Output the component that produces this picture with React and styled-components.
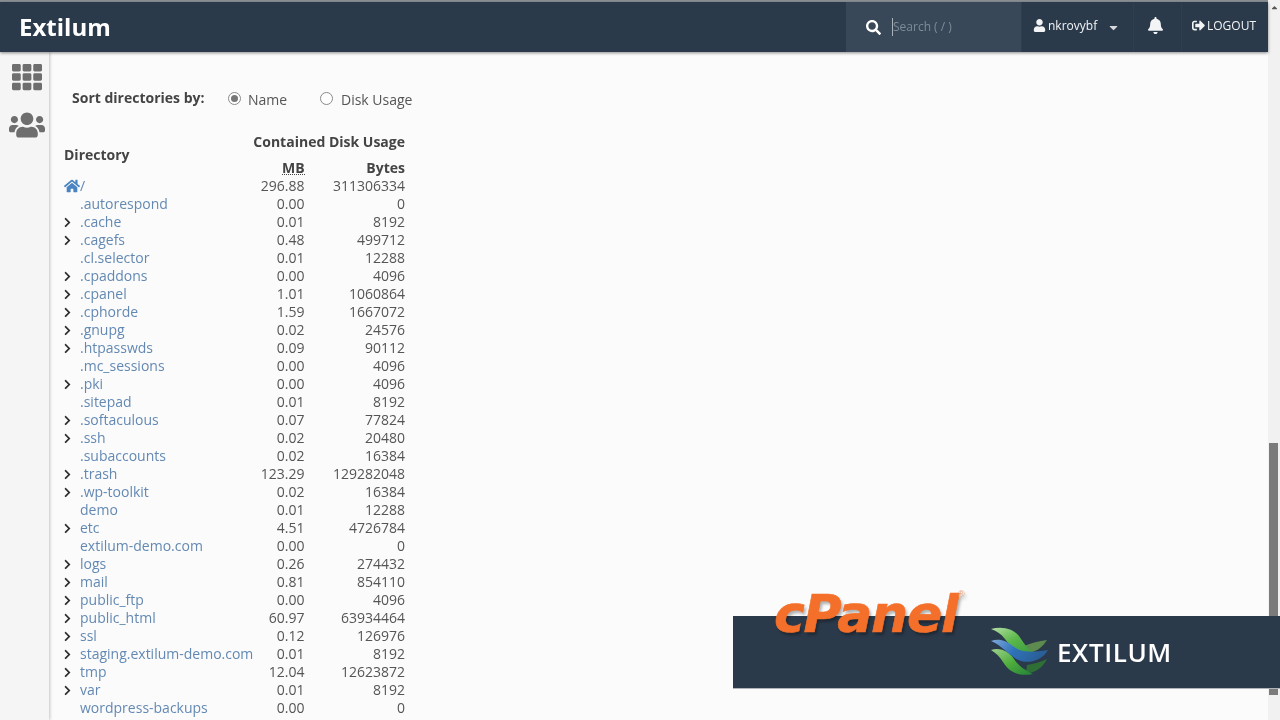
import styled, { createGlobalStyle } from "styled-components";
import { FaTh, FaUsers, FaHome, FaSearch, FaUser, FaBell, FaSignOutAlt, FaChevronRight, FaCaretDown, FaCaretUp } from "react-icons/fa";

const GlobalStyle = createGlobalStyle`
  html, body { margin: 0; padding: 0; height: 100%; overflow: hidden; }
  body { font-family: "Open Sans", "Liberation Sans", sans-serif; background: #fbfbfb; color: #444; }
`;

const Page = styled.div`
  width: 1280px;
  height: 720px;
  display: flex;
  position: relative;
  overflow: hidden;
  background: #fbfbfb;
  filter: blur(0.4px);
`;

const Viewport = styled.div`
  width: 1268px;
  display: flex;
  flex-direction: column;
`;

const TopEdge = styled.div`
  height: 2px;
  background: #8b9096;
`;

const Navbar = styled.header`
  height: 50px;
  background: #2b3a4b;
  display: flex;
  align-items: center;
  box-shadow: 0 1px 3px rgba(0, 0, 0, 0.45);
  position: relative;
  z-index: 2;
`;

const Brand = styled.div`
  flex: 1;
  padding-left: 19px;
  padding-bottom: 2px;
  color: #fff;
  font-size: 24px;
  font-weight: 700;
`;

const SearchBox = styled.div`
  width: 175px;
  height: 100%;
  background: #384858;
  display: flex;
  align-items: center;
  color: #fff;
  font-size: 15px;
  padding-left: 20px;
  box-sizing: border-box;
`;

const Placeholder = styled.span`
  margin-left: 11px;
  border-left: 1px solid #aab2ba;
  color: #7f8b97;
  font-size: 12px;
  line-height: 18px;
`;

const NavItem = styled.div`
  height: 100%;
  width: ${(p) => p.$w}px;
  box-sizing: border-box;
  padding-left: ${(p) => p.$pad}px;
  padding-bottom: 3px;
  display: flex;
  align-items: center;
  color: #f2f4f6;
  font-size: 12px;
  gap: ${(p) => p.$gap || 0}px;
  border-left: 1px solid #2f3f50;
`;

const Caret = styled.span`
  display: flex;
  margin-left: 8px;
  margin-top: 3px;
  font-size: 13px;
  color: #d5d9dd;
`;

const Body = styled.div`
  flex: 1;
  display: flex;
  min-height: 0;
`;

const Sidebar = styled.nav`
  width: 49px;
  background: #f5f5f5;
  box-shadow: 1px 0 3px rgba(0, 0, 0, 0.22);
  display: flex;
  flex-direction: column;
  align-items: center;
  padding: 10px 0 0 4px;
  box-sizing: border-box;
  color: #6e6e6e;
  gap: 15px;
`;

const SideIcon = styled.div`
  display: flex;
  font-size: ${(p) => p.$size}px;
`;

const Main = styled.main`
  flex: 1;
  padding: 36px 0 0 15px;
  overflow: hidden;
`;

const SortRow = styled.div`
  display: flex;
  align-items: center;
  height: 22px;
  padding-left: 8px;
  font-size: 14px;
`;

const SortLabel = styled.span`
  font-weight: 700;
  width: 156px;
  color: #444;
  margin-top: -3px;
`;

const RadioGroup = styled.label`
  display: flex;
  align-items: center;
  width: ${(p) => p.$w}px;
  color: #555;
`;

const Radio = styled.span`
  width: 13px;
  height: 13px;
  border-radius: 50%;
  border: 1px solid #8a8a8a;
  background: #fff;
  box-sizing: border-box;
  margin-right: ${(p) => p.$gap}px;
  margin-top: -1px;
  display: flex;
  align-items: center;
  justify-content: center;
  &::after {
    content: "";
    width: 7px;
    height: 7px;
    border-radius: 50%;
    background: ${(p) => (p.$on ? "#777" : "transparent")};
  }
`;

const Table = styled.table`
  border-collapse: collapse;
  font-size: 14px;
  margin-top: 19px;
  color: #555;
  td, th { padding: 0; height: 18px; line-height: 18px; white-space: nowrap; }
`;

const HeadCell = styled.th`
  font-weight: 700;
  color: #444;
  text-align: ${(p) => p.$align || "right"};
  width: ${(p) => p.$w || "auto"};
`;

const DirectoryCell = styled(HeadCell)`
  && { padding-top: 3px; }
`;

const GroupCell = styled(HeadCell)`
  && { height: 26px; }
`;

const UnitCell = styled(HeadCell)`
  && { height: 22px; line-height: 18px; vertical-align: bottom; }
`;

const Abbr = styled.span`
  border-bottom: 1px dotted #444;
  line-height: 13px;
  display: inline-block;
`;

const NameCell = styled.td`
  color: #6389b3;
`;

const NameInner = styled.div`
  display: flex;
  align-items: center;
`;

const Toggle = styled.span`
  width: 18px;
  margin-left: -2px;
  display: flex;
  color: #2d2d2d;
  font-size: 11px;
  box-sizing: border-box;
`;

const NumCell = styled.td`
  text-align: right;
`;

const HomeIcon = styled(FaHome)`
  font-size: 16px;
  color: #4a84c2;
`;

const Scrollbar = styled.aside`
  width: 12px;
  background: #f1f1f1;
  display: flex;
  flex-direction: column;
  align-items: flex-end;
  padding-top: 3px;
  box-sizing: border-box;
`;

const ArrowUp = styled.span`
  display: flex;
  font-size: 9px;
  color: #555;
  padding-right: 1px;
  height: 440px;
`;

const Thumb = styled.div`
  width: 9px;
  height: 252px;
  margin-right: 2px;
  background: #7b7b7b;
`;

const Banner = styled.div`
  position: absolute;
  left: 733px;
  top: 616px;
  width: 547px;
  height: 72px;
  background: #2b3a4b;
  box-shadow: 0 1px 0 #aeb4ba;
`;

const CpanelMark = styled.div`
  position: absolute;
  left: 41px;
  top: -32px;
  color: #f4702a;
  font-family: "DejaVu Sans", sans-serif;
  font-size: 52px;
  line-height: 60px;
  font-weight: 700;
  font-style: italic;
  letter-spacing: -1.2px;
  -webkit-text-stroke: 0.6px #f4702a;
  text-shadow: 2px 3px 3px rgba(0, 0, 0, 0.3);
  sup {
    font-family: "Liberation Sans", sans-serif;
    font-size: 9px;
    font-style: normal;
    font-weight: 400;
    letter-spacing: 0;
    -webkit-text-stroke: 0;
    color: #e9a27a;
    position: absolute;
    top: 0;
    right: -7px;
    line-height: 20px;
  }
`;

const ExtilumMark = styled.div`
  position: absolute;
  left: 256px;
  top: 11px;
  display: flex;
  align-items: center;
  gap: 8px;
`;

const ExtilumText = styled.span`
  color: #fff;
  font-family: "Open Sans", sans-serif;
  font-size: 26px;
  font-weight: 600;
  letter-spacing: 0.6px;
  line-height: 50px;
`;

const dirs = [
  ["/", "296.88", "311306334", "home"],
  [".autorespond", "0.00", "0"],
  [".cache", "0.01", "8192", "open"],
  [".cagefs", "0.48", "499712", "open"],
  [".cl.selector", "0.01", "12288"],
  [".cpaddons", "0.00", "4096", "open"],
  [".cpanel", "1.01", "1060864", "open"],
  [".cphorde", "1.59", "1667072", "open"],
  [".gnupg", "0.02", "24576", "open"],
  [".htpasswds", "0.09", "90112", "open"],
  [".mc_sessions", "0.00", "4096"],
  [".pki", "0.00", "4096", "open"],
  [".sitepad", "0.01", "8192"],
  [".softaculous", "0.07", "77824", "open"],
  [".ssh", "0.02", "20480", "open"],
  [".subaccounts", "0.02", "16384"],
  [".trash", "123.29", "129282048", "open"],
  [".wp-toolkit", "0.02", "16384", "open"],
  ["demo", "0.01", "12288"],
  ["etc", "4.51", "4726784", "open"],
  ["extilum-demo.com", "0.00", "0"],
  ["logs", "0.26", "274432", "open"],
  ["mail", "0.81", "854110", "open"],
  ["public_ftp", "0.00", "4096", "open"],
  ["public_html", "60.97", "63934464", "open"],
  ["ssl", "0.12", "126976", "open"],
  ["staging.extilum-demo.com", "0.01", "8192", "open"],
  ["tmp", "12.04", "12623872", "open"],
  ["var", "0.01", "8192", "open"],
  ["wordpress-backups", "0.00", "0"],
];

// leaf mark, drawn in the coordinates of the reference crop
const Leaf = () => (
  <svg width="60" height="50" viewBox="0 0 60 50">
    <defs>
      <linearGradient id="topLeaf" x1="0" y1="0" x2="1" y2="1">
        <stop offset="0" stopColor="#b5dfa6" />
        <stop offset="0.5" stopColor="#5cb84a" />
        <stop offset="1" stopColor="#3a9a3f" />
      </linearGradient>
      <linearGradient id="lowLeaf" x1="0" y1="0" x2="1" y2="1">
        <stop offset="0" stopColor="#9fd18c" />
        <stop offset="0.5" stopColor="#4fae3c" />
        <stop offset="1" stopColor="#23803a" />
      </linearGradient>
      <linearGradient id="band" x1="0" y1="0" x2="1" y2="0.3">
        <stop offset="0" stopColor="#7fa9dc" />
        <stop offset="0.5" stopColor="#2f72b8" />
        <stop offset="1" stopColor="#2a5f97" />
      </linearGradient>
    </defs>
    <path d="M35 19 C42 16 50 14 58 13 C53 21 47 25 38 26Z" fill="#5d8a4e" />
    <path d="M2 2 C12 -1 24 1 30 9 C34 15 38 21 44 26 C30 28 22 20 16 12 C12 7 8 4 2 2Z" fill="url(#topLeaf)" />
    <path d="M38 38 C45 37 52 35 58 32 C54 40 47 46 37 46Z" fill="#2f6f35" />
    <path d="M2 23 C12 20 20 25 25 32 C30 40 38 44 44 47 C30 50 20 45 14 35 C11 30 7 26 2 23Z" fill="url(#lowLeaf)" />
    <path d="M2 14 C10 11 18 14 24 19 C31 25 40 26 59 23 C54 32 42 37 32 34 C22 31 14 19 2 14Z" fill="url(#band)" />
  </svg>
);

const App = () => {
  return (
    <Page>
      <GlobalStyle />
      <Viewport>
        <TopEdge />
        <Navbar>
          <Brand>Extilum</Brand>
          <SearchBox>
            <FaSearch />
            <Placeholder>Search ( / )</Placeholder>
          </SearchBox>
          <NavItem $w={112} $pad={11} $gap={2}>
            <FaUser size={13} />
            nkrovybf
            <Caret><FaCaretDown /></Caret>
          </NavItem>
          <NavItem $w={48} $pad={13}>
            <FaBell size={17} />
          </NavItem>
          <NavItem $w={87} $pad={10} $gap={2}>
            <FaSignOutAlt size={13} />
            LOGOUT
          </NavItem>
        </Navbar>
        <Body>
          <Sidebar>
            <SideIcon $size={30}><FaTh /></SideIcon>
            <SideIcon $size={36}><FaUsers /></SideIcon>
          </Sidebar>
          <Main>
            <SortRow>
              <SortLabel>Sort directories by:</SortLabel>
              <RadioGroup $w={92}><Radio $on $gap={7} />Name</RadioGroup>
              <RadioGroup $w={100}><Radio $gap={8} />Disk Usage</RadioGroup>
            </SortRow>
            <Table>
              <thead>
                <tr>
                  <DirectoryCell $align="left" rowSpan={2}>Directory</DirectoryCell>
                  <GroupCell colSpan={2}>Contained Disk Usage</GroupCell>
                </tr>
                <tr>
                  <UnitCell $w="51px"><Abbr>MB</Abbr></UnitCell>
                  <UnitCell $w="100px">Bytes</UnitCell>
                </tr>
              </thead>
              <tbody>
                {dirs.map(([name, mb, bytes, kind]) => (
                  <tr key={name}>
                    <NameCell>
                      <NameInner>
                        {kind === "home" ? (
                          <HomeIcon />
                        ) : (
                          <Toggle>{kind === "open" && <FaChevronRight />}</Toggle>
                        )}
                        {name}
                      </NameInner>
                    </NameCell>
                    <NumCell>{mb}</NumCell>
                    <NumCell>{bytes}</NumCell>
                  </tr>
                ))}
              </tbody>
            </Table>
          </Main>
        </Body>
      </Viewport>
      <Scrollbar>
        <ArrowUp><FaCaretUp /></ArrowUp>
        <Thumb />
      </Scrollbar>
      <Banner>
        <CpanelMark>cPanel<sup>®</sup></CpanelMark>
        <ExtilumMark>
          <Leaf />
          <ExtilumText>EXTILUM</ExtilumText>
        </ExtilumMark>
      </Banner>
    </Page>
  );
};

export default App;
